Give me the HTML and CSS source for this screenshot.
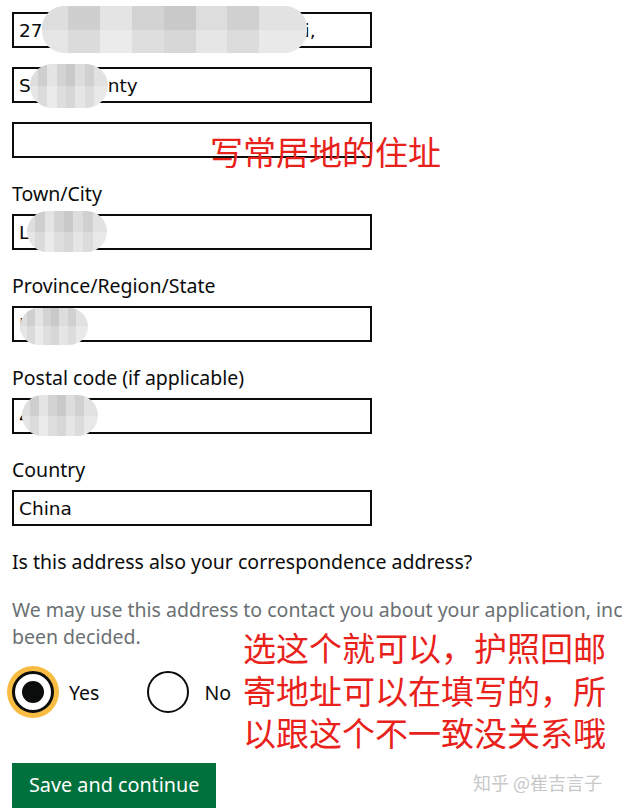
FILE: index.html
```html
<!DOCTYPE html>
<html lang="en">
<head>
<meta charset="utf-8">
<title>Address</title>
<link rel="stylesheet" href="styles.css">
</head>
<body>
<main class="page">
  <div class="field field-tight">
    <div class="box"><span>27</span><span class="hidden-run run-1"></span><span>i,</span></div>
    <div class="blob blob-1"></div>
  </div>
  <div class="field field-tight">
    <div class="box"><span>S</span><span class="hidden-run run-2"></span><span>nty</span></div>
    <div class="blob blob-2"></div>
  </div>
  <div class="field">
    <div class="box"></div>
  </div>

  <div class="field">
    <label class="label">Town/City</label>
    <div class="box"><span>L</span></div>
    <div class="blob blob-3"></div>
  </div>
  <div class="field">
    <label class="label">Province/Region/State</label>
    <div class="box"><span>H</span></div>
    <div class="blob blob-4"></div>
  </div>
  <div class="field">
    <label class="label">Postal code (if applicable)</label>
    <div class="box"><span>4</span></div>
    <div class="blob blob-5"></div>
  </div>
  <div class="field">
    <label class="label">Country</label>
    <div class="box"><span>China</span></div>
  </div>

  <fieldset class="question">
    <legend class="legend">Is this address also your correspondence address?</legend>
    <div class="hint">
      <span class="hint-line">We may use this address to contact you about your application, including after it has</span>
      <span class="hint-line">been decided.</span>
    </div>
    <div class="radios">
      <div class="radio">
        <span class="radio-circle checked"><span class="radio-dot"></span></span>
        <span class="radio-label">Yes</span>
      </div>
      <div class="radio">
        <span class="radio-circle"></span>
        <span class="radio-label">No</span>
      </div>
    </div>
  </fieldset>

  <button class="button">Save and continue</button>
</main>

<div class="note note-1">写常居地的住址</div>
<div class="note note-2">选这个就可以，护照回邮<br>寄地址可以在填写的，所<br>以跟这个不一致没关系哦</div>
<div class="watermark">知乎 @崔吉言子</div>
</body>
</html>
```

FILE: styles.css
```css
html, body {
  margin: 0;
  padding: 0;
  background: #ffffff;
  overflow: hidden;
}

body {
  width: 622px;
  height: 808px;
  position: relative;
  font-family: "Noto Sans", "Liberation Sans", sans-serif;
  color: #0b0c0c;
}

.page {
  display: flex;
  flex-direction: column;
  align-items: flex-start;
  padding: 12px 0 0 12px;
}

.field {
  position: relative;
  display: flex;
  flex-direction: column;
  margin-bottom: 23px;
}

.field-tight {
  margin-bottom: 19px;
}

.label {
  font-size: 19.5px;
  line-height: 25px;
  margin-bottom: 8px;
}

.box {
  box-sizing: border-box;
  width: 360px;
  height: 36px;
  border: 2px solid #0b0c0c;
  display: flex;
  align-items: center;
  padding-left: 5px;
  font-family: "DejaVu Sans", "Noto Sans", sans-serif;
  font-size: 18.5px;
  color: #0b0c0c;
  white-space: nowrap;
}

.hidden-run {
  display: inline-block;
}

.run-1 { width: 262px; }
.run-2 { width: 77px; }

.blob {
  position: absolute;
  border-radius: 22px;
  background:
    linear-gradient(180deg, rgba(255,255,255,0.0) 0 50%, rgba(255,255,255,0.25) 50% 100%),
    linear-gradient(90deg, #dedede 0 10%, #cfcfcf 10% 22%, #e4e4e4 22% 34%, #d3d3d3 34% 46%, #c9c9c9 46% 58%, #dddddd 58% 70%, #d0d0d0 70% 82%, #e2e2e2 82% 100%);
}

.blob-1 { left: 30px; top: -6px; width: 265px; height: 47px; }
.blob-2 { left: 18px; top: -3px; width: 78px; height: 44px; }
.blob-3 { left: 15px; top: 30px; width: 80px; height: 41px; }
.blob-4 { left: 8px; top: 35px; width: 68px; height: 37px; }
.blob-5 { left: 10px; top: 30px; width: 76px; height: 41px; }

.question {
  border: 0;
  margin: 0;
  padding: 0;
  display: flex;
  flex-direction: column;
  align-items: flex-start;
}

.legend {
  padding: 0;
  font-size: 19.5px;
  line-height: 25px;
  margin-bottom: 22px;
}

.hint {
  display: flex;
  flex-direction: column;
  width: 610px;
  overflow: hidden;
  font-size: 19.5px;
  line-height: 27px;
  color: #6a7073;
}

.hint-line {
  white-space: nowrap;
}

.radios {
  display: flex;
  align-items: center;
  margin-top: 21px;
  gap: 48px;
}

.radio {
  display: flex;
  align-items: center;
  gap: 15px;
}

.radio-circle {
  box-sizing: border-box;
  width: 42px;
  height: 42px;
  border: 2px solid #0b0c0c;
  border-radius: 50%;
  display: flex;
  align-items: center;
  justify-content: center;
  background: #fff;
}

.radio-circle.checked {
  border-width: 3px;
  box-shadow: 0 0 0 5px #f9bc43;
}

.radio-dot {
  width: 22px;
  height: 22px;
  border-radius: 50%;
  background: #0b0c0c;
}

.radio-label {
  font-size: 19.5px;
  line-height: 25px;
}

.button {
  margin-top: 50px;
  box-sizing: border-box;
  height: 45px;
  padding: 0 17px 2px;
  border: 0;
  background: #00703c;
  box-shadow: 0 2px 0 #002d18;
  color: #ffffff;
  font-family: "Noto Sans", "Liberation Sans", sans-serif;
  font-size: 19.8px;
  line-height: 25px;
}

.note {
  position: absolute;
  color: #e8221b;
  font-family: "Noto Sans CJK SC", "Noto Sans", sans-serif;
  font-size: 33px;
  white-space: nowrap;
}

.note-1 {
  left: 210px;
  top: 133px;
  line-height: 36px;
}

.note-2 {
  left: 243px;
  top: 626px;
  line-height: 42.5px;
}

.watermark {
  position: absolute;
  left: 473px;
  top: 770px;
  font-family: "Noto Sans CJK SC", "Noto Sans", sans-serif;
  font-size: 18px;
  line-height: 24px;
  color: #c8c8c8;
  white-space: nowrap;
}
```
